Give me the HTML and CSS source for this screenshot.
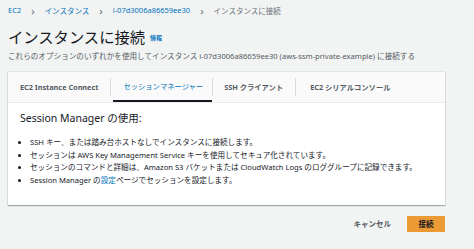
FILE: index.html
```html
<!DOCTYPE html>
<html lang="ja">
<head>
  <meta charset="UTF-8" />
  <title>インスタンスに接続</title>
  <link rel="stylesheet" href="styles.css">
</head>
<body>
  <div class="page">
    <div class="breadcrumb">
      <a class="crumb-link">EC2</a>
      <span class="crumb-sep">›</span>
      <a class="crumb-link">インスタンス</a>
      <span class="crumb-sep">›</span>
      <a class="crumb-link">i-07d3006a86659ee30</a>
      <span class="crumb-sep">›</span>
      <span class="crumb-current">インスタンスに接続</span>
    </div>

    <div class="title-row">
      <h1 class="page-title">インスタンスに接続</h1>
      <a class="info-link">情報</a>
    </div>
    <p class="page-desc">これらのオプションのいずれかを使用してインスタンス i-07d3006a86659ee30 (aws-ssm-private-example) に接続する</p>

    <div class="card">
      <div class="tabs">
        <div class="tab">EC2 Instance Connect</div>
        <div class="tab tab-active">セッションマネージャー</div>
        <div class="tab">SSH クライアント</div>
        <div class="tab">EC2 シリアルコンソール</div>
      </div>
      <div class="card-body">
        <h2 class="section-title">Session Manager の使用:</h2>
        <ul class="bullets">
          <li>SSH キー、または踏み台ホストなしでインスタンスに接続します。</li>
          <li>セッションは AWS Key Management Service キーを使用してセキュア化されています。</li>
          <li>セッションのコマンドと詳細は、Amazon S3 バケットまたは CloudWatch Logs のロググループに記録できます。</li>
          <li>Session Manager の<a class="inline-link">設定</a>ページでセッションを設定します。</li>
        </ul>
      </div>
    </div>

    <div class="actions">
      <button class="btn-cancel">キャンセル</button>
      <button class="btn-primary">接続</button>
    </div>
  </div>
</body>
</html>
```

FILE: styles.css
```css
body {
  margin: 0;
  background-color: #f2f3f3;
  color: #16191f;
  font-family: "Noto Sans", "Noto Sans CJK JP", sans-serif;
}

.page {
  width: 437px;
  padding: 4px 0 0 8px;
}

.breadcrumb {
  display: flex;
  align-items: center;
  gap: 8px;
  font-size: 7.5px;
  height: 12px;
}

.crumb-link {
  color: #0073bb;
}

.crumb-sep {
  color: #687078;
  font-size: 11px;
  margin: 0 2px;
}

.crumb-current {
  color: #687078;
}

.title-row {
  display: flex;
  align-items: center;
  gap: 5px;
  margin-top: 10px;
  height: 20px;
}

.page-title {
  margin: 0;
  font-size: 15.3px;
  font-weight: normal;
}

.info-link {
  color: #0073bb;
  font-size: 6px;
  font-weight: bold;
  margin-top: 3px;
}

.page-desc {
  margin: 4px 0 0;
  font-size: 7.6px;
  color: #545b64;
}

.card {
  margin-top: 11px;
  background-color: white;
  box-shadow: 0 1px 1px rgba(0, 22, 40, 0.3), 0 0 0 1px rgba(0, 28, 36, 0.06);
}

.tabs {
  display: flex;
  align-items: stretch;
  height: 30px;
  background-color: #fafafa;
  border-bottom: 1px solid #eaeded;
  padding-left: 12px;
}

.tab {
  display: flex;
  align-items: center;
  font-size: 7.3px;
  font-weight: bold;
  color: #545b64;
  padding: 0 12px 0 0;
  margin: 6px 12px 6px 0;
  border-right: 1px solid #d5dbdb;
}

.tab:last-child {
  border-right: none;
}

.tab-active {
  color: #0073bb;
  font-weight: normal;
  padding: 0 9px 0 10px;
  margin: 0 0 0 -10px;
  border-right: none;
  border-bottom: 2px solid #16191f;
}

.tab-active + .tab {
  border-left: 1px solid #d5dbdb;
  padding-left: 11px;
  margin-right: 14px;
}

.card-body {
  padding: 7px 12px 18px;
}

.section-title {
  margin: 0;
  font-size: 10.5px;
  font-weight: normal;
}

.bullets {
  margin: 11px 0 0;
  padding-left: 10px;
  font-size: 7.6px;
  line-height: 12.7px;
}

.inline-link {
  color: #0073bb;
}

.actions {
  display: flex;
  justify-content: flex-end;
  align-items: center;
  gap: 16px;
  margin-top: 11px;
}

.btn-cancel {
  background: transparent;
  border: none;
  font-family: inherit;
  font-size: 7.5px;
  font-weight: bold;
  color: #545b64;
  padding: 0;
}

.btn-primary {
  background-color: #ec9a36;
  border: none;
  border-radius: 1px;
  font-family: inherit;
  font-size: 7.5px;
  font-weight: bold;
  color: #16191f;
  width: 38px;
  height: 16px;
  padding: 0;
}
```
